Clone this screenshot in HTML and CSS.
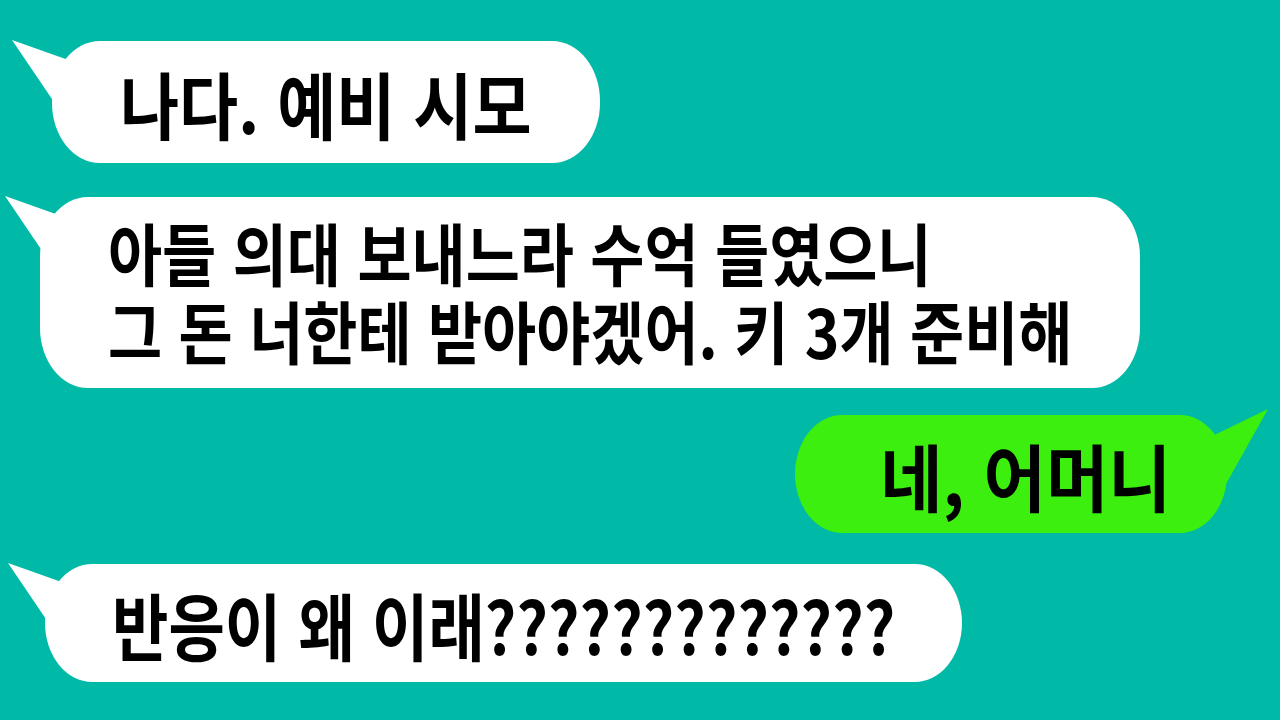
FILE: index.html
```html
<!DOCTYPE html>
<html lang="ko">
<head>
    <meta charset="UTF-8">
    <meta name="viewport" content="width=device-width, initial-scale=1.0">
    <title>예비 시모 대화</title>
    <link rel="stylesheet" href="styles.css">
</head>
<body>
    <div class="chat">
        <div class="row row-first">
            <div class="bubble bubble-left first"><span class="text">나다. 예비 시모</span></div>
        </div>
        <div class="row row-second">
            <div class="bubble bubble-left second">
                <div class="lines">
                    <span class="text small">아들 의대 보내느라 수억 들였으니</span>
                    <span class="text small">그 돈 너한테 받아야겠어. 키 3개 준비해</span>
                </div>
            </div>
        </div>
        <div class="row row-mine">
            <div class="bubble bubble-right"><span class="text wide">네, 어머니</span></div>
        </div>
        <div class="row row-last">
            <div class="bubble bubble-left last"><span class="text narrow">반응이 왜 이래?????????????</span></div>
        </div>
    </div>
</body>
</html>
```

FILE: styles.css
```css
body, html {
    margin: 0;
    padding: 0;
    width: 100%;
    height: 100%;
    background-color: #00b9a6;
    overflow: hidden;
}

.chat {
    display: flex;
    flex-direction: column;
    padding-top: 41px;
}

.row {
    display: flex;
}

.row-first {
    padding-left: 52px;
}

.row-second {
    margin-top: 34px;
    padding-left: 40px;
}

.row-mine {
    margin-top: 27px;
    justify-content: flex-end;
    padding-right: 53px;
}

.row-last {
    margin-top: 31px;
    padding-left: 45px;
}

.bubble {
    position: relative;
    display: flex;
    align-items: center;
    box-sizing: border-box;
    background-color: #fff;
    color: #000;
    font-family: "Noto Sans CJK KR", "Noto Sans", sans-serif;
    font-weight: 700;
    border-radius: 48px / 60px;
    white-space: nowrap;
}

.lines {
    display: flex;
    flex-direction: column;
    gap: 0;
}

.text {
    display: inline-block;
    font-size: 73px;
    line-height: 80px;
    transform: scaleX(0.88);
    transform-origin: left center;
}

.text.small {
    font-size: 68px;
    line-height: 78px;
    transform: scaleX(0.865);
}

.text.wide {
    transform: scaleX(0.93);
}

.text.narrow {
    transform: scaleX(0.84);
}

.first {
    width: 548px;
    height: 122px;
    padding-left: 68px;
}

.second {
    width: 1100px;
    height: 191px;
    padding-left: 68px;
    padding-bottom: 4px;
}

.last {
    width: 917px;
    height: 118px;
    padding-left: 67px;
}

.bubble-right {
    width: 432px;
    height: 118px;
    padding-left: 85px;
    background-color: #3cef0e;
}

.bubble-left::before {
    content: "";
    position: absolute;
    left: -40px;
    top: -1px;
    width: 62px;
    height: 62px;
    background-color: #fff;
    clip-path: polygon(0 0, 62px 22px, 62px 62px, 42px 62px);
}

.second::before {
    left: -35px;
}

.last::before {
    left: -37px;
}

.bubble-right::before {
    content: "";
    position: absolute;
    right: -41px;
    top: -6px;
    width: 62px;
    height: 75px;
    background-color: #3cef0e;
    clip-path: polygon(62px 0, 0 30px, 0 75px, 20px 75px);
}
```
